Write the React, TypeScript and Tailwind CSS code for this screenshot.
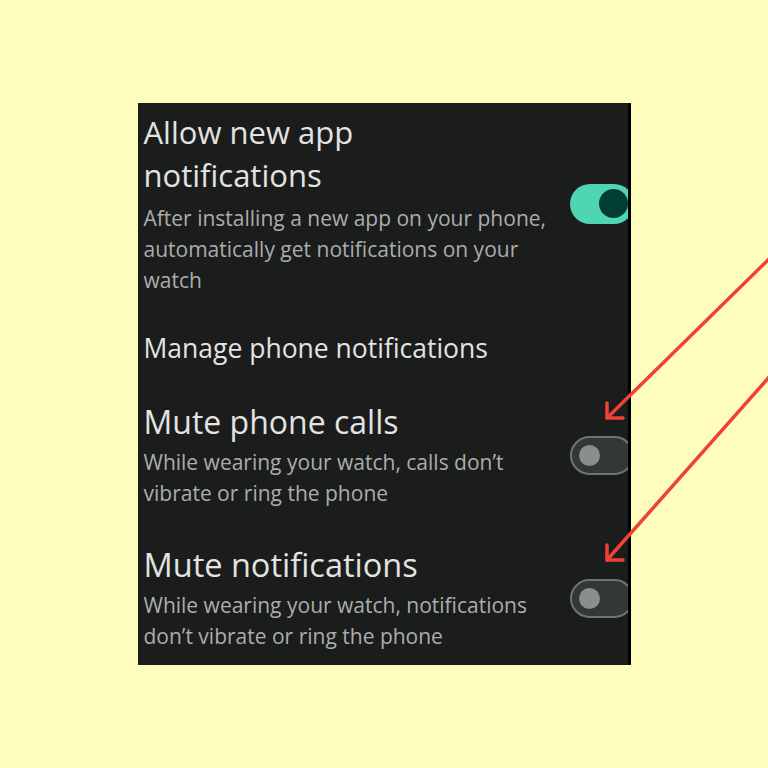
const font = { fontFamily: '"Open Sans", "Noto Sans", sans-serif' };

function Toggle({ on }: { on: boolean }) {
  if (on) {
    return (
      <div className="mr-[-6px] flex h-[40px] w-[64px] shrink-0 items-center justify-end rounded-full bg-[#4fd4b4] pr-[6px]">
        <div className="h-[29px] w-[29px] rounded-full bg-[#013d31]" />
      </div>
    );
  }
  return (
    <div className="mr-[-6px] flex h-[39px] w-[64px] shrink-0 items-center rounded-full border-2 border-[#6f7472] bg-[#333736] pl-[7px]">
      <div className="h-[21px] w-[21px] rounded-full bg-[#8a8f8d]" />
    </div>
  );
}

function Arrows() {
  return (
    <svg className="pointer-events-none absolute left-0 top-0" width="768" height="768" viewBox="0 0 768 768">
      <g stroke="#ef4136" strokeWidth="3.5" fill="none" strokeLinecap="round" strokeLinejoin="round">
        <path d="M770 258 L607 418" />
        <path d="M607 418 L623 418 M607 418 L607 403" />
        <path d="M770 376 L607 560" />
        <path d="M607 560 L623 560 M607 560 L607 545" />
      </g>
    </svg>
  );
}

export default function App() {
  return (
    <div className="relative flex h-[768px] w-[768px] items-center justify-center bg-[#fefdbc]" style={font}>
      <div className="h-[562px] w-[493px] overflow-hidden border-r-[3px] border-black bg-[#1b1c1c] pl-[6px] pt-[8px]">
        <div className="flex items-center">
          <div className="min-w-0 flex-1 pr-[8px]">
            <div className="max-w-[360px] text-[31px] leading-[43px] text-[#e2e3e2]">Allow new app notifications</div>
            <div className="mt-[6px] text-[21px] leading-[31px] text-[#abadac]">
              After installing a new app on your phone, automatically get notifications on your watch
            </div>
          </div>
          <Toggle on />
        </div>

        <div className="mt-[36px] text-[26.5px] leading-[32px] text-[#e2e3e2]">Manage phone notifications</div>

        <div className="mt-[38px] flex items-center">
          <div className="min-w-0 flex-1 pr-[8px]">
            <div className="text-[32px] leading-[40px] text-[#e2e3e2]">Mute phone calls</div>
            <div className="mt-[5px] text-[21px] leading-[31px] text-[#abadac]">
              While wearing your watch, calls don’t vibrate or ring the phone
            </div>
          </div>
          <Toggle on={false} />
        </div>

        <div className="mt-[36px] flex items-center">
          <div className="min-w-0 flex-1 pr-[8px]">
            <div className="text-[32.5px] leading-[40px] text-[#e2e3e2]">Mute notifications</div>
            <div className="mt-[5px] text-[21px] leading-[31px] text-[#abadac]">
              While wearing your watch, notifications don’t vibrate or ring the phone
            </div>
          </div>
          <Toggle on={false} />
        </div>
      </div>
      <Arrows />
    </div>
  );
}
